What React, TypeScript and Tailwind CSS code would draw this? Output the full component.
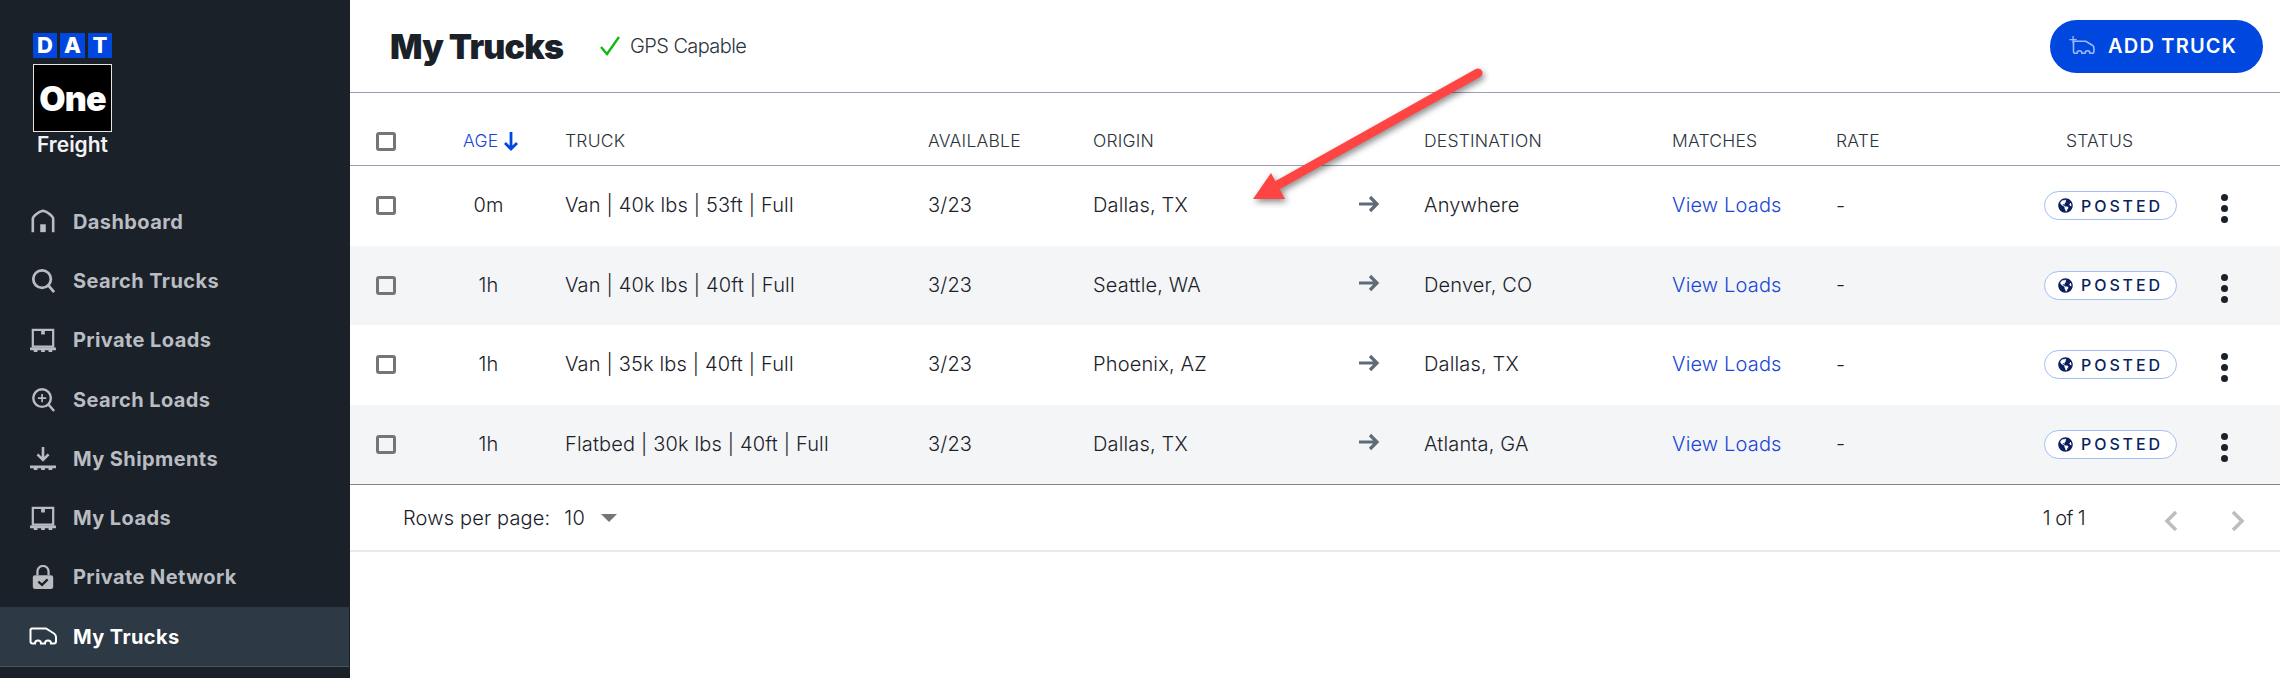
import { FaGlobeAmericas } from "react-icons/fa";

type Truck = {
  age: string;
  truck: string;
  origin: string;
  destination: string;
};

const trucks: Truck[] = [
  { age: "0m", truck: "Van | 40k lbs | 53ft | Full", origin: "Dallas, TX", destination: "Anywhere" },
  { age: "1h", truck: "Van | 40k lbs | 40ft | Full", origin: "Seattle, WA", destination: "Denver, CO" },
  { age: "1h", truck: "Van | 35k lbs | 40ft | Full", origin: "Phoenix, AZ", destination: "Dallas, TX" },
  { age: "1h", truck: "Flatbed | 30k lbs | 40ft | Full", origin: "Dallas, TX", destination: "Atlanta, GA" },
];

const Pallet = () => (
  <path d="M0 21h28v3h-4v2h-4v-2h-4v2h-4v-2H8v2H4v-2H0z" fill="currentColor" />
);

const icons: Record<string, React.ReactNode> = {
  Dashboard: (
    <g fill="none" stroke="currentColor" strokeWidth="2.800">
      <path d="M3 25V10.500C3 8 9 3 14 2c5 1 11 6 11 8.500V25" />
      <rect x="11" y="16.500" width="6" height="8.500" fill="currentColor" stroke="none" />
    </g>
  ),
  "Search Trucks": (
    <g fill="none" stroke="currentColor" strokeWidth="3">
      <circle cx="13" cy="12" r="9.500" />
      <path d="M20 19l6 7" />
    </g>
  ),
  "Private Loads": (
    <>
      <path d="M3 2h22v18H3z" fill="none" stroke="currentColor" strokeWidth="2.400" />
      <path d="M12 2h4v5h-4z" fill="currentColor" />
      <Pallet />
    </>
  ),
  "Search Loads": (
    <g fill="none" stroke="currentColor" strokeWidth="2.600">
      <circle cx="13" cy="12" r="9.500" />
      <path d="M20 19l6 7" />
      <path d="M13 7.500v9M8.500 12h9" strokeWidth="1.800" />
    </g>
  ),
  "My Shipments": (
    <>
      <path d="M14 1v13M8 9l6 6 6-6" fill="none" stroke="currentColor" strokeWidth="2.800" />
      <Pallet />
    </>
  ),
  "My Loads": (
    <>
      <path d="M3 2h22v18H3z" fill="none" stroke="currentColor" strokeWidth="2.400" />
      <path d="M12 2h4v5h-4z" fill="currentColor" />
      <Pallet />
    </>
  ),
  "Private Network": (
    <>
      <path d="M8 11V7a6 6 0 0 1 12 0v4" fill="none" stroke="currentColor" strokeWidth="2.400" />
      <rect x="3" y="11" width="22" height="15" rx="2.500" fill="currentColor" />
      <path d="M9 18l4 3.500 6-6" fill="none" stroke="#1a2129" strokeWidth="2.400" />
    </>
  ),
};

const TruckIcon = ({ className }: { className: string }) => (
  <svg viewBox="0 0 28 20" className={className} fill="none" stroke="currentColor" strokeWidth="2">
    <path d="M3 1.500H17L25 6.500Q27 8 27 10V14Q27 16.500 25 16.500H22A3 3 0 0 0 16 16.500H12A3 3 0 0 0 6 16.500H3.500Q1.500 16.500 1.500 14V3Q1.500 1.500 3 1.500Z" />
  </svg>
);

const navItems = ["Dashboard", "Search Trucks", "Private Loads", "Search Loads", "My Shipments", "My Loads", "Private Network"];

const Checkbox = ({ className = "" }: { className?: string }) => (
  <div className={`w-[20px] h-[19px] border-[3px] border-[#757575] rounded-[3px] ${className}`} />
);

const gridCols = "grid grid-cols-[76px_139px_363px_165px_257px_74px_248px_164px_208px_156px_80px] items-center";

function Sidebar() {
  return (
    <aside className="w-[350px] h-[678px] shrink-0 bg-[#1a2129] flex flex-col">
      <div className="h-[192px] pt-[33px] pl-[33px]">
        <div className="w-[79px] flex justify-between text-white font-[Inter] font-extrabold text-[22px] leading-[25px]">
          <span className="w-[24px] h-[25px] bg-[#0047e0] text-center">D</span>
          <span className="w-[25px] h-[25px] bg-[#0047e0] text-center">A</span>
          <span className="w-[24px] h-[25px] bg-[#0047e0] text-center">T</span>
        </div>
        <div className="w-[79px] h-[68px] mt-[6px] bg-black border border-[#e5e5e5] flex items-center justify-center text-white font-[Inter] font-black text-[34px] tracking-tight">
          One
        </div>
        <div className="w-[79px] text-center text-[#f2f2f2] font-[Inter] font-semibold text-[21px] leading-[24px] mt-px whitespace-nowrap">Freight</div>
      </div>
      <nav className="flex flex-col">
        {navItems.map((item) => (
          <a key={item} className="h-[59.300px] flex items-center text-[#b9bdc2] font-[Inter] font-bold text-[20px] tracking-[0.02em]">
            <svg viewBox="0 0 28 27" className="w-[26px] h-[25px] ml-[30px] mr-[17px] shrink-0">
              {icons[item]}
            </svg>
            {item}
          </a>
        ))}
        <a className="h-[60px] flex items-center bg-[#2d3944] border-b border-[#4a545d] text-white font-[Inter] font-bold text-[20px] tracking-[0.02em] mr-px">
          <TruckIcon className="w-[28px] h-[20px] ml-[29px] mr-[16px] shrink-0" />
          My Trucks
        </a>
      </nav>
    </aside>
  );
}

function Row({ t, shaded }: { t: Truck; shaded: boolean }) {
  return (
    <div className={`${gridCols} h-[79.500px] text-[20px] font-[350] tracking-[0.008em] text-[#1a2129] font-[Inter] ${shaded ? "bg-[#f4f5f7]" : "bg-white"}`}>
      <Checkbox className="ml-[26px]" />
      <div className="text-center pr-[14px] pb-px">{t.age}</div>
      <div className="pb-px">{t.truck}</div>
      <div className="pb-px">3/23</div>
      <div className="pb-px">{t.origin}</div>
      <svg viewBox="0 0 22 18" className="w-[22px] h-[18px] -mt-[4px] ml-[8px] text-[#5f6b78]" fill="none" stroke="currentColor" strokeWidth="3.200">
        <path d="M1 9h18M12 2l7 7-7 7" />
      </svg>
      <div className="pb-px">{t.destination}</div>
      <div className="text-[#1a47d6] pb-px">View Loads</div>
      <div>-</div>
      <div className="w-[133px] h-[29px] rounded-full border border-[#a3bdf5] bg-white flex items-center justify-center gap-[8px] text-[#0b1f5e] font-medium text-[16px] tracking-[0.18em]">
        <FaGlobeAmericas className="w-[15px] h-[15px]" />
        POSTED
      </div>
      <div className="w-[48px] flex flex-col items-center gap-[4px] mt-[6px]">
        <span className="w-[7px] h-[7px] rounded-full bg-[#1a2129]" />
        <span className="w-[7px] h-[7px] rounded-full bg-[#1a2129]" />
        <span className="w-[7px] h-[7px] rounded-full bg-[#1a2129]" />
      </div>
    </div>
  );
}

export default function App() {
  return (
    <div className="relative flex w-[2280px] h-[678px] bg-white overflow-hidden font-[Inter]">
      <Sidebar />
      <main className="flex-1 min-w-0">
        {/* Title bar */}
        <header className="h-[93px] border-b border-[#99a1b0] flex items-center pl-[40px] pr-[17px]">
          <h1 className="text-[34px] font-black text-[#1a2129] tracking-tight">My Trucks</h1>
          <svg viewBox="0 0 20 20" className="w-[20px] h-[20px] ml-[37px] text-[#14b814]" fill="none" stroke="currentColor" strokeWidth="2.400">
            <path d="M1 11l6 7L19 1" />
          </svg>
          <span className="ml-[10px] text-[20px] font-light text-[#2b333b] tracking-[-0.03em]">GPS Capable</span>
          <button className="ml-auto w-[213px] h-[53px] rounded-full bg-[#0047e0] text-white font-semibold text-[20px] tracking-[0.06em] flex items-center pl-[20px] gap-[13px]">
            <span className="relative w-[25px] h-[20px] text-[#9db8f5]">
              <TruckIcon className="w-[23px] h-[16px] absolute right-0 bottom-0" />
              <span className="absolute left-[-2px] top-[-5px] text-[15px] leading-none font-normal">+</span>
            </span>
            ADD TRUCK
          </button>
        </header>

        {/* Table */}
        <div className={`${gridCols} h-[73px] border-b border-[#99a1b0] text-[17.500px] font-[350] tracking-[0.012em] text-[#2b333b] pt-[24px]`}>
          <Checkbox className="ml-[26px]" />
          <div className="flex items-center text-[#1a47d6] ml-[37px]">
            AGE
            <svg viewBox="0 0 16 20" className="w-[16px] h-[20px] ml-[5px] text-[#0047e0]" fill="none" stroke="currentColor" strokeWidth="2.800">
              <path d="M8 1v17M2 12l6 6 6-6" />
            </svg>
          </div>
          <div>TRUCK</div>
          <div>AVAILABLE</div>
          <div>ORIGIN</div>
          <div />
          <div>DESTINATION</div>
          <div>MATCHES</div>
          <div>RATE</div>
          <div className="pl-[22px]">STATUS</div>
          <div />
        </div>
        {trucks.map((t, i) => (
          <Row key={i} t={t} shaded={i % 2 === 1} />
        ))}

        {/* Footer */}
        <div className="h-[68px] border-t border-t-[#7f848a] border-b-2 border-b-[#e8e9ec] flex items-center text-[20px] font-[350] tracking-[0.008em] text-[#1a2129] pl-[53px] pr-[35px]">
          <span>Rows per page:</span>
          <span className="ml-[14px]">10</span>
          <span className="ml-[16px] w-0 h-0 border-x-[8px] border-x-transparent border-t-[8px] border-t-[#757575]" />
          <span className="ml-auto tracking-[-0.03em]">1 of 1</span>
          <svg viewBox="0 0 14 22" className="w-[14px] h-[22px] ml-[79px] mt-[6px] text-[#bdbdbd]" fill="none" stroke="currentColor" strokeWidth="3.500">
            <path d="M12 2L3 11l9 9" />
          </svg>
          <svg viewBox="0 0 14 22" className="w-[14px] h-[22px] ml-[53px] mt-[6px] text-[#bdbdbd]" fill="none" stroke="currentColor" strokeWidth="3.500">
            <path d="M2 2l9 9-9 9" />
          </svg>
        </div>
      </main>

      {/* Red annotation arrow */}
      <svg className="absolute left-[1240px] top-[60px] w-[250px] h-[150px] pointer-events-none drop-shadow-[2px_3px_3px_rgba(0,0,0,0.45)]" viewBox="0 0 250 150">
        <path d="M238 13L36 126" fill="none" stroke="#ff4444" strokeWidth="9" strokeLinecap="round" />
        <path d="M13 139L31 113L45 139Z" fill="#ff4444" />
      </svg>
    </div>
  );
}
